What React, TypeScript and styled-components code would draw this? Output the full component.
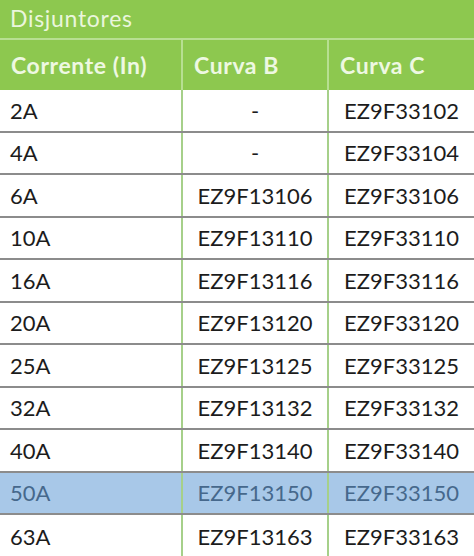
import { FC } from "react";
import { styled, createGlobalStyle } from "styled-components";

interface RowProps {
  $highlight?: boolean;
}

const GlobalStyle = createGlobalStyle`
  html, body {
    margin: 0;
    padding: 0;
    background: #ffffff;
  }
  body {
    font-family: Lato, "Open Sans", sans-serif;
  }
`;

const Sheet = styled.section`
  width: 474px;
  height: 556px;
  overflow: hidden;
  background: #ffffff;
`;

const Title = styled.div`
  height: 40px;
  display: flex;
  align-items: center;
  padding: 0 0 2px 10px;
  background: #8dc84f;
  color: #eaf6dc;
  font-size: 23px;
  letter-spacing: 0.7px;
  border-bottom: 2px solid #b8df92;
  box-sizing: border-box;
`;

const HeaderRow = styled.div`
  display: grid;
  grid-template-columns: 181px 146px 1fr;
  height: 50px;
  background: #8dc84f;
`;

const HeaderCell = styled.div`
  display: flex;
  align-items: center;
  padding-left: 11px;
  color: #eef8e2;
  font-size: 23px;
  font-weight: 700;
  letter-spacing: 0.6px;
  & + & {
    border-left: 2px solid #b8df92;
  }
`;

const Row = styled.div<RowProps>`
  display: grid;
  grid-template-columns: 181px 146px 1fr;
  height: 42.5px;
  box-sizing: border-box;
  border-bottom: 2px solid #8c8c8c;
  background: ${({ $highlight }) => ($highlight ? "#a8c8e8" : "#ffffff")};
  color: ${({ $highlight }) => ($highlight ? "#46688c" : "#1c1c1c")};
  &:last-child {
    border-bottom: none;
  }
`;

const Cell = styled.div<{ $center?: boolean }>`
  display: flex;
  align-items: center;
  justify-content: ${({ $center }) => ($center ? "center" : "flex-start")};
  padding-left: ${({ $center }) => ($center ? "0" : "10px")};
  font-size: 22px;
  & + & {
    border-left: 2px solid #a6d08a;
  }
`;

const rows: [string, string, string][] = [
  ["2A", "-", "EZ9F33102"],
  ["4A", "-", "EZ9F33104"],
  ["6A", "EZ9F13106", "EZ9F33106"],
  ["10A", "EZ9F13110", "EZ9F33110"],
  ["16A", "EZ9F13116", "EZ9F33116"],
  ["20A", "EZ9F13120", "EZ9F33120"],
  ["25A", "EZ9F13125", "EZ9F33125"],
  ["32A", "EZ9F13132", "EZ9F33132"],
  ["40A", "EZ9F13140", "EZ9F33140"],
  ["50A", "EZ9F13150", "EZ9F33150"],
  ["63A", "EZ9F13163", "EZ9F33163"],
];

const App: FC = () => {
  return (
    <>
      <GlobalStyle />
      <Sheet>
        <Title>Disjuntores</Title>
        <HeaderRow>
          <HeaderCell>Corrente (In)</HeaderCell>
          <HeaderCell>Curva B</HeaderCell>
          <HeaderCell>Curva C</HeaderCell>
        </HeaderRow>
        {rows.map(([amp, b, c]) => (
          <Row key={amp} $highlight={amp === "50A"}>
            <Cell>{amp}</Cell>
            <Cell $center>{b}</Cell>
            <Cell $center>{c}</Cell>
          </Row>
        ))}
      </Sheet>
    </>
  );
};

export default App;
